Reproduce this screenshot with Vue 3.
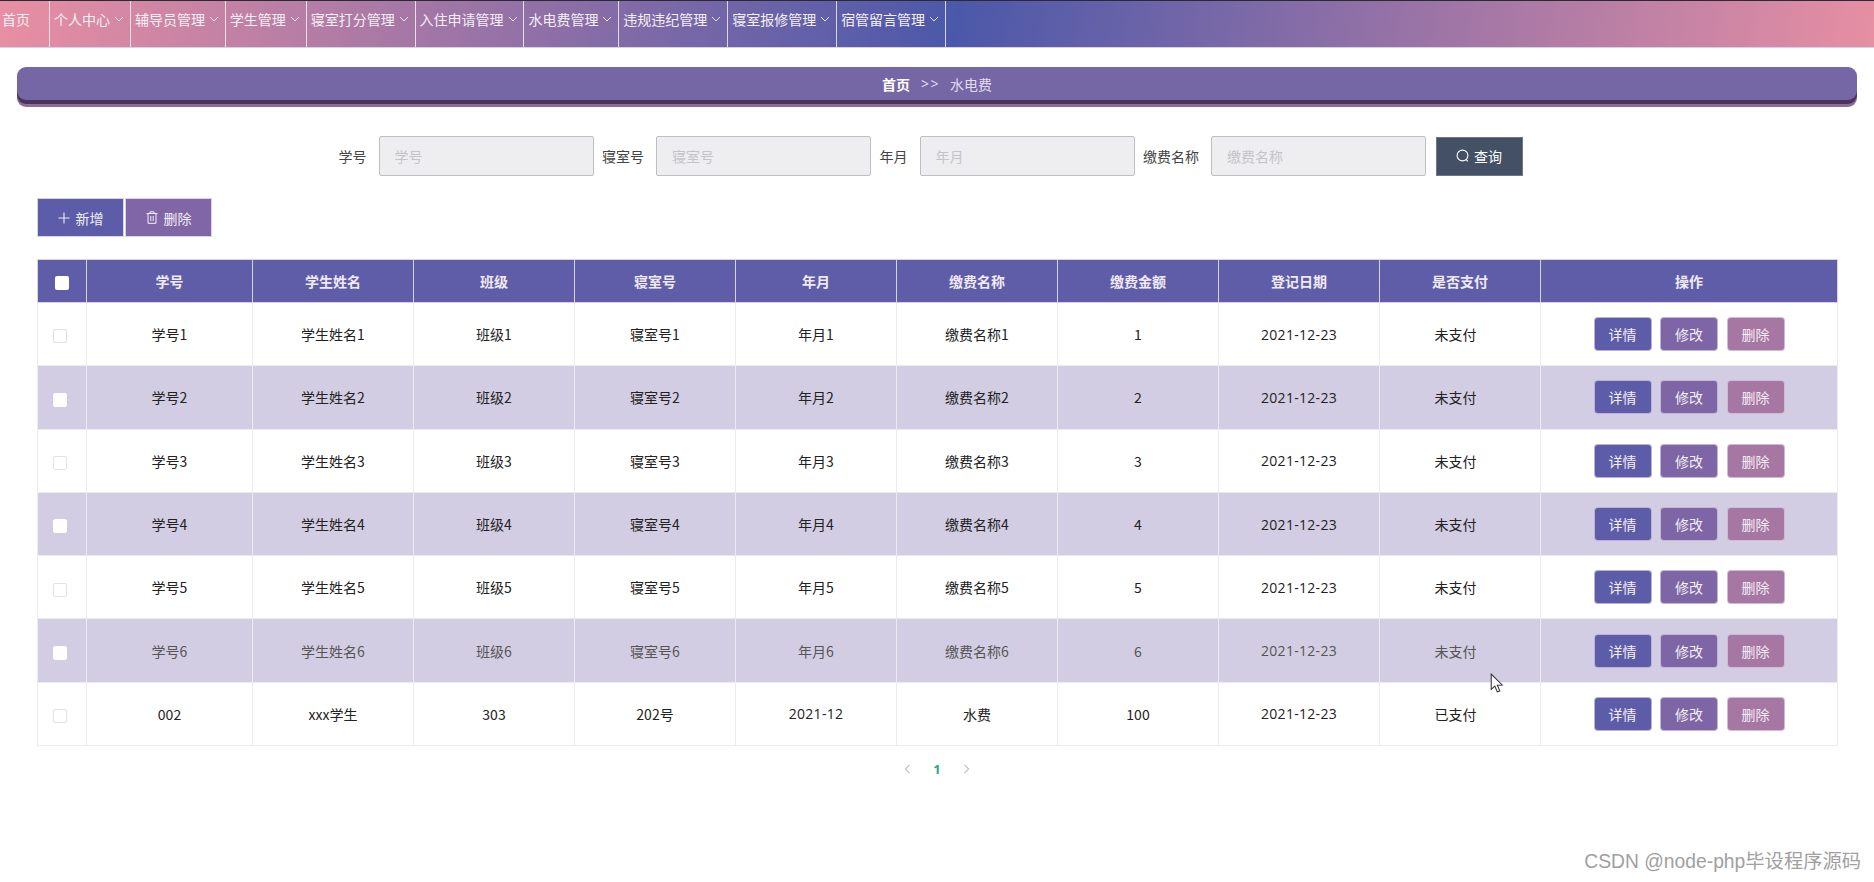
<script setup>
const nav = [
  { t: '首页', c: false },
  { t: '个人中心', c: true },
  { t: '辅导员管理', c: true },
  { t: '学生管理', c: true },
  { t: '寝室打分管理', c: true },
  { t: '入住申请管理', c: true },
  { t: '水电费管理', c: true },
  { t: '违规违纪管理', c: true },
  { t: '寝室报修管理', c: true },
  { t: '宿管留言管理', c: true }
]
const filters = [
  { l: '学号' },
  { l: '寝室号' },
  { l: '年月' },
  { l: '缴费名称' }
]
const cols = ['学号', '学生姓名', '班级', '寝室号', '年月', '缴费名称', '缴费金额', '登记日期', '是否支付']
const rows = [1, 2, 3, 4, 5, 6].map(i => [
  '学号' + i, '学生姓名' + i, '班级' + i, '寝室号' + i, '年月' + i, '缴费名称' + i, String(i), '2021-12-23', '未支付'
])
rows.push(['002', 'xxx学生', '303', '202号', '2021-12', '水费', '100', '2021-12-23', '已支付'])
const isDate = v => /^\d{4}-\d/.test(v)
</script>

<template>
  <div class="page">
    <nav class="nav">
      <div v-for="n in nav" :key="n.t" class="nav-item" :class="{ plain: !n.c }">
        <span>{{ n.t }}</span>
        <svg v-if="n.c" class="chev" viewBox="0 0 10 10" width="10" height="10">
          <path d="M1 3 L5 7 L9 3" fill="none" stroke="currentColor" stroke-width="1" />
        </svg>
      </div>
    </nav>

    <div class="crumb">
      <b>首页</b><span class="sep">&gt;&gt;</span><span class="cur">水电费</span>
    </div>

    <div class="search">
      <div v-for="f in filters" :key="f.l" class="field">
        <label>{{ f.l }}</label>
        <input :placeholder="f.l" />
      </div>
      <button class="query">
        <svg viewBox="0 0 14 14" width="14" height="14">
          <circle cx="6.5" cy="6.5" r="5.4" fill="none" stroke="currentColor" stroke-width="1.1" />
          <path d="M10 10.4 L11.8 12.4" stroke="currentColor" stroke-width="1.1" />
        </svg>
        查询
      </button>
    </div>

    <div class="actions">
      <button class="add">
        <svg viewBox="0 0 12 12" width="12" height="12">
          <path d="M6 0.5 V11.5 M0.5 6 H11.5" stroke="currentColor" stroke-width="1.1" fill="none" />
        </svg>
        新增
      </button>
      <button class="del">
        <svg viewBox="0 0 12 13" width="12" height="13">
          <path d="M0.5 2.5 H11.5 M4 2.5 V0.8 H8 V2.5 M2 2.5 V12.3 H10 V2.5 M4.8 5 V10 M7.2 5 V10" stroke="currentColor" stroke-width="1" fill="none" />
        </svg>
        删除
      </button>
    </div>

    <table class="grid">
      <colgroup>
        <col class="c0" />
        <col class="c1" />
        <col v-for="i in 8" :key="i" class="cn" />
        <col class="cl" />
      </colgroup>
      <thead>
        <tr>
          <th><span class="box head-box"></span></th>
          <th v-for="c in cols" :key="c">{{ c }}</th>
          <th>操作</th>
        </tr>
      </thead>
      <tbody>
        <tr v-for="(r, i) in rows" :key="i" :class="{ alt: i % 2 === 1, dim: i === 5 }">
          <td><span class="box"></span></td>
          <td v-for="(v, j) in r" :key="j" :class="{ date: isDate(v), paid: j === 8 }">{{ v }}</td>
          <td>
            <div class="ops">
              <button class="op b1">详情</button>
              <button class="op b2">修改</button>
              <button class="op b3">删除</button>
            </div>
          </td>
        </tr>
      </tbody>
    </table>

    <div class="pager">
      <svg viewBox="0 0 8 12" width="7" height="10"><path d="M6.5 1 L1.5 6 L6.5 11" fill="none" stroke="#c0c4cc" stroke-width="1.5" /></svg>
      <span class="num">1</span>
      <svg viewBox="0 0 8 12" width="7" height="10"><path d="M1.5 1 L6.5 6 L1.5 11" fill="none" stroke="#c0c4cc" stroke-width="1.5" /></svg>
    </div>

    <svg class="cursor" viewBox="0 0 13 20" width="14" height="21">
      <path d="M1 1 V15.5 L4.4 12.4 L6.8 18 L9.2 17 L6.8 11.6 L11.4 11.4 Z" fill="#fff" stroke="#333" stroke-width="1" />
    </svg>

    <div class="mark">CSDN @node-php毕设程序源码</div>
  </div>
</template>

<style scoped>
.page {
  position: relative;
  width: 1874px;
  height: 882px;
  overflow: hidden;
  background: #fff;
  font-family: "Noto Sans CJK SC", "Open Sans", sans-serif;
  font-size: 14px;
  color: #333;
}
.nav {
  display: flex;
  height: 46px;
  border-top: 1px solid #2a2a35;
  border-bottom: 1px solid #d9d0e4;
  background: linear-gradient(100deg, #e98fa3 0%, #4b58a9 51%, #e78fa3 100%);
}
.nav-item {
  display: flex;
  align-items: center;
  padding: 0 5.9px 11px 4px;
  gap: 4px;
  color: #f4eef6;
  border-right: 1px solid rgba(255, 255, 255, 0.75);
  white-space: nowrap;
}
.nav-item.plain {
  padding-left: 2px;
  padding-right: 19px;
}
.chev {
  opacity: 0.9;
}
.crumb {
  margin: 19px 17px 0;
  height: 33px;
  border-radius: 9px;
  background: #7566a6;
  box-shadow: 0 4px 0 #4a3558, 0 7px 0 #8f6a9c;
  display: flex;
  align-items: center;
  justify-content: center;
  color: #fff;
}
.crumb b {
  font-weight: 700;
}
.sep {
  margin: 0 10px 0 11px;
  color: #e3dcef;
  font-family: "Open Sans", sans-serif;
  letter-spacing: 1.5px;
}
.cur {
  color: #e3dcef;
}
.search {
  display: flex;
  align-items: center;
  justify-content: center;
  margin-top: 36px;
  padding-right: 13px;
}
.field {
  display: flex;
  align-items: center;
  margin-right: 8.5px;
}
.field label {
  margin-right: 12px;
  color: #444;
}
.field input {
  width: 215px;
  height: 40px;
  box-sizing: border-box;
  padding: 0 15px;
  background: #eeeef1;
  border: 1px solid #bfbfc3;
  border-radius: 2px;
  font: inherit;
  outline: none;
}
.field input::placeholder {
  color: #c3c4c9;
}
.query {
  width: 87px;
  height: 39px;
  margin-left: 1px;
  display: flex;
  align-items: center;
  justify-content: center;
  gap: 4px;
  background: #435066;
  color: #fff;
  border: 1px solid #6d7889;
  font: inherit;
  padding: 0;
}
.actions {
  display: flex;
  margin: 22px 0 0 37px;
  gap: 1px;
}
.actions button {
  width: 87px;
  height: 39px;
  display: flex;
  align-items: center;
  justify-content: center;
  gap: 6px;
  color: #f1edf6;
  border: 1px solid #d8d4e8;
  font: inherit;
  padding: 0;
}
.add {
  background: #5d5ca8;
}
.del {
  background: #8066a6;
}
.grid {
  margin: 22px 0 0 37px;
  width: 1800px;
  table-layout: fixed;
  border-collapse: collapse;
}
.c0 { width: 49px; }
.c1 { width: 166px; }
.cn { width: 161px; }
.cl { width: 297px; }
.grid th {
  height: 42px;
  padding: 0;
  background: #5f5da8;
  color: #efeaf5;
  font-size: 14px;
  font-weight: 700;
  border: 1px solid #d6d3e6;
}
.grid td {
  height: 62.3px;
  padding: 0;
  text-align: center;
  color: #222;
  background: #fff;
  border: 1px solid #ebebf2;
}
.grid td.date {
  font-family: "Open Sans", "Noto Sans CJK SC", sans-serif;
  letter-spacing: 0.3px;
}
.grid td.paid {
  padding-right: 9px;
}
.grid tr.alt td {
  background: #d3cde4;
}
.grid tr.dim td {
  color: #555;
}
.box {
  display: inline-block;
  width: 12px;
  height: 12px;
  vertical-align: middle;
  border: 1px solid #e2e2e6;
  border-radius: 2px;
  background: #fff;
  margin-right: 4px;
}
.alt .box {
  border-color: #fff;
}
.head-box {
  width: 14px;
  height: 14px;
  border: none;
  margin-right: 0;
}
.ops {
  display: flex;
  justify-content: center;
  gap: 8.5px;
}
.op {
  width: 58px;
  height: 34px;
  color: #f4eef6;
  border: 1px solid rgba(225, 215, 235, 0.7);
  border-radius: 4px;
  font: inherit;
  padding: 0;
}
.b1 { background: #5d5ca8; }
.b2 { background: #7e65a6; }
.b3 { background: #a777a3; }
.pager {
  display: flex;
  align-items: center;
  justify-content: center;
  gap: 22px;
  margin-top: 15px;
  height: 16px;
}
.num {
  color: #2ba58a;
  font-size: 13px;
  font-weight: 700;
  font-family: "Open Sans", sans-serif;
}
.cursor {
  position: absolute;
  left: 1490px;
  top: 673px;
}
.mark {
  position: absolute;
  right: 13px;
  top: 850px;
  font-size: 19.3px;
  color: #a0a0a0;
  line-height: 24px;
  font-family: "Liberation Sans", "Noto Sans CJK SC", sans-serif;
}
</style>
